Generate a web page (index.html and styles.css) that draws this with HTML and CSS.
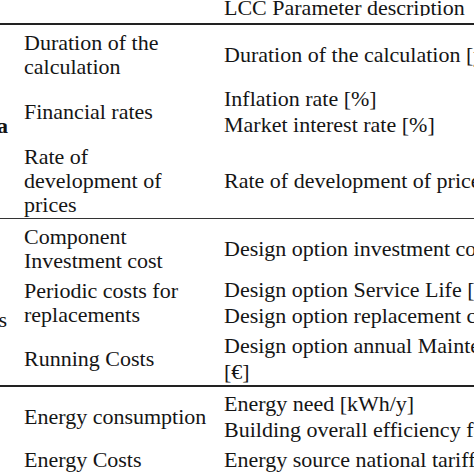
FILE: index.html
```html
<!DOCTYPE html>
<html lang="en">
<head>
    <meta charset="UTF-8">
    <meta name="viewport" content="width=device-width, initial-scale=1.0">
    <title>LCC Parameters</title>
    <link rel="stylesheet" href="styles.css">
</head>
<body>
    <div class="sheet">
        <div class="head">
            <div class="cat"></div>
            <div class="param"></div>
            <div class="desc">LCC Parameter description</div>
        </div>

        <section class="group group-data">
            <div class="cat cat-data"><span>Economic data</span></div>

            <div class="param">Duration of the<br>calculation</div>
            <div class="desc"><p>Duration of the calculation [years]</p></div>

            <div class="param">Financial rates</div>
            <div class="desc"><p>Inflation rate [%]</p><p>Market interest rate [%]</p></div>

            <div class="param">Rate of<br>development of<br>prices</div>
            <div class="desc"><p>Rate of development of prices [%]</p></div>
        </section>

        <section class="group group-costs">
            <div class="cat cat-costs"><span>Costs</span></div>

            <div class="param">Component<br>Investment cost</div>
            <div class="desc"><p>Design option investment cost [€]</p></div>

            <div class="param">Periodic costs for<br>replacements</div>
            <div class="desc"><p>Design option Service Life [years]</p><p>Design option replacement cost [€]</p></div>

            <div class="param">Running Costs</div>
            <div class="desc"><p>Design option annual Maintenance</p><p>[€]</p></div>
        </section>

        <section class="group group-energy">
            <div class="cat"></div>

            <div class="param">Energy consumption</div>
            <div class="desc"><p>Energy need [kWh/y]</p><p>Building overall efficiency factor</p></div>

            <div class="param">Energy Costs</div>
            <div class="desc"><p>Energy source national tariff [€/kWh]</p></div>
        </section>
    </div>
</body>
</html>
```

FILE: styles.css
```css
* {
    margin: 0;
    padding: 0;
    box-sizing: border-box;
}

body {
    background: #fff;
    color: #151515;
    font-family: 'Liberation Serif', 'Times New Roman', serif;
    font-size: 22px;
    line-height: 24px;
}

.sheet {
    width: 474px;
    height: 474px;
    overflow: hidden;
}

.head,
.group {
    display: grid;
    grid-template-columns: 24px 200px 250px;
}

.head {
    line-height: 16px;
    padding-bottom: 7px;
    border-bottom: 2px solid #222;
}

.group {
    align-items: center;
}

.desc {
    white-space: nowrap;
    overflow: hidden;
}

.desc p {
    line-height: 26px;
}

.cat {
    grid-row: 1 / span 3;
    display: flex;
    justify-content: flex-end;
    overflow: hidden;
    white-space: nowrap;
    padding-right: 15px;
}

.group-data {
    padding-top: 6px;
    padding-bottom: 1px;
    row-gap: 7px;
    border-bottom: 1px solid #333;
}

.cat-data {
    font-weight: bold;
    padding-top: 4px;
    padding-right: 16px;
}

.group-costs {
    padding-top: 6px;
    row-gap: 4px;
    border-bottom: 2px solid #222;
}

.cat-costs {
    padding-top: 30px;
    padding-right: 17px;
}

.group-energy {
    padding-top: 4px;
    row-gap: 4px;
}

.group-energy .cat {
    grid-row: 1 / span 2;
}
```
